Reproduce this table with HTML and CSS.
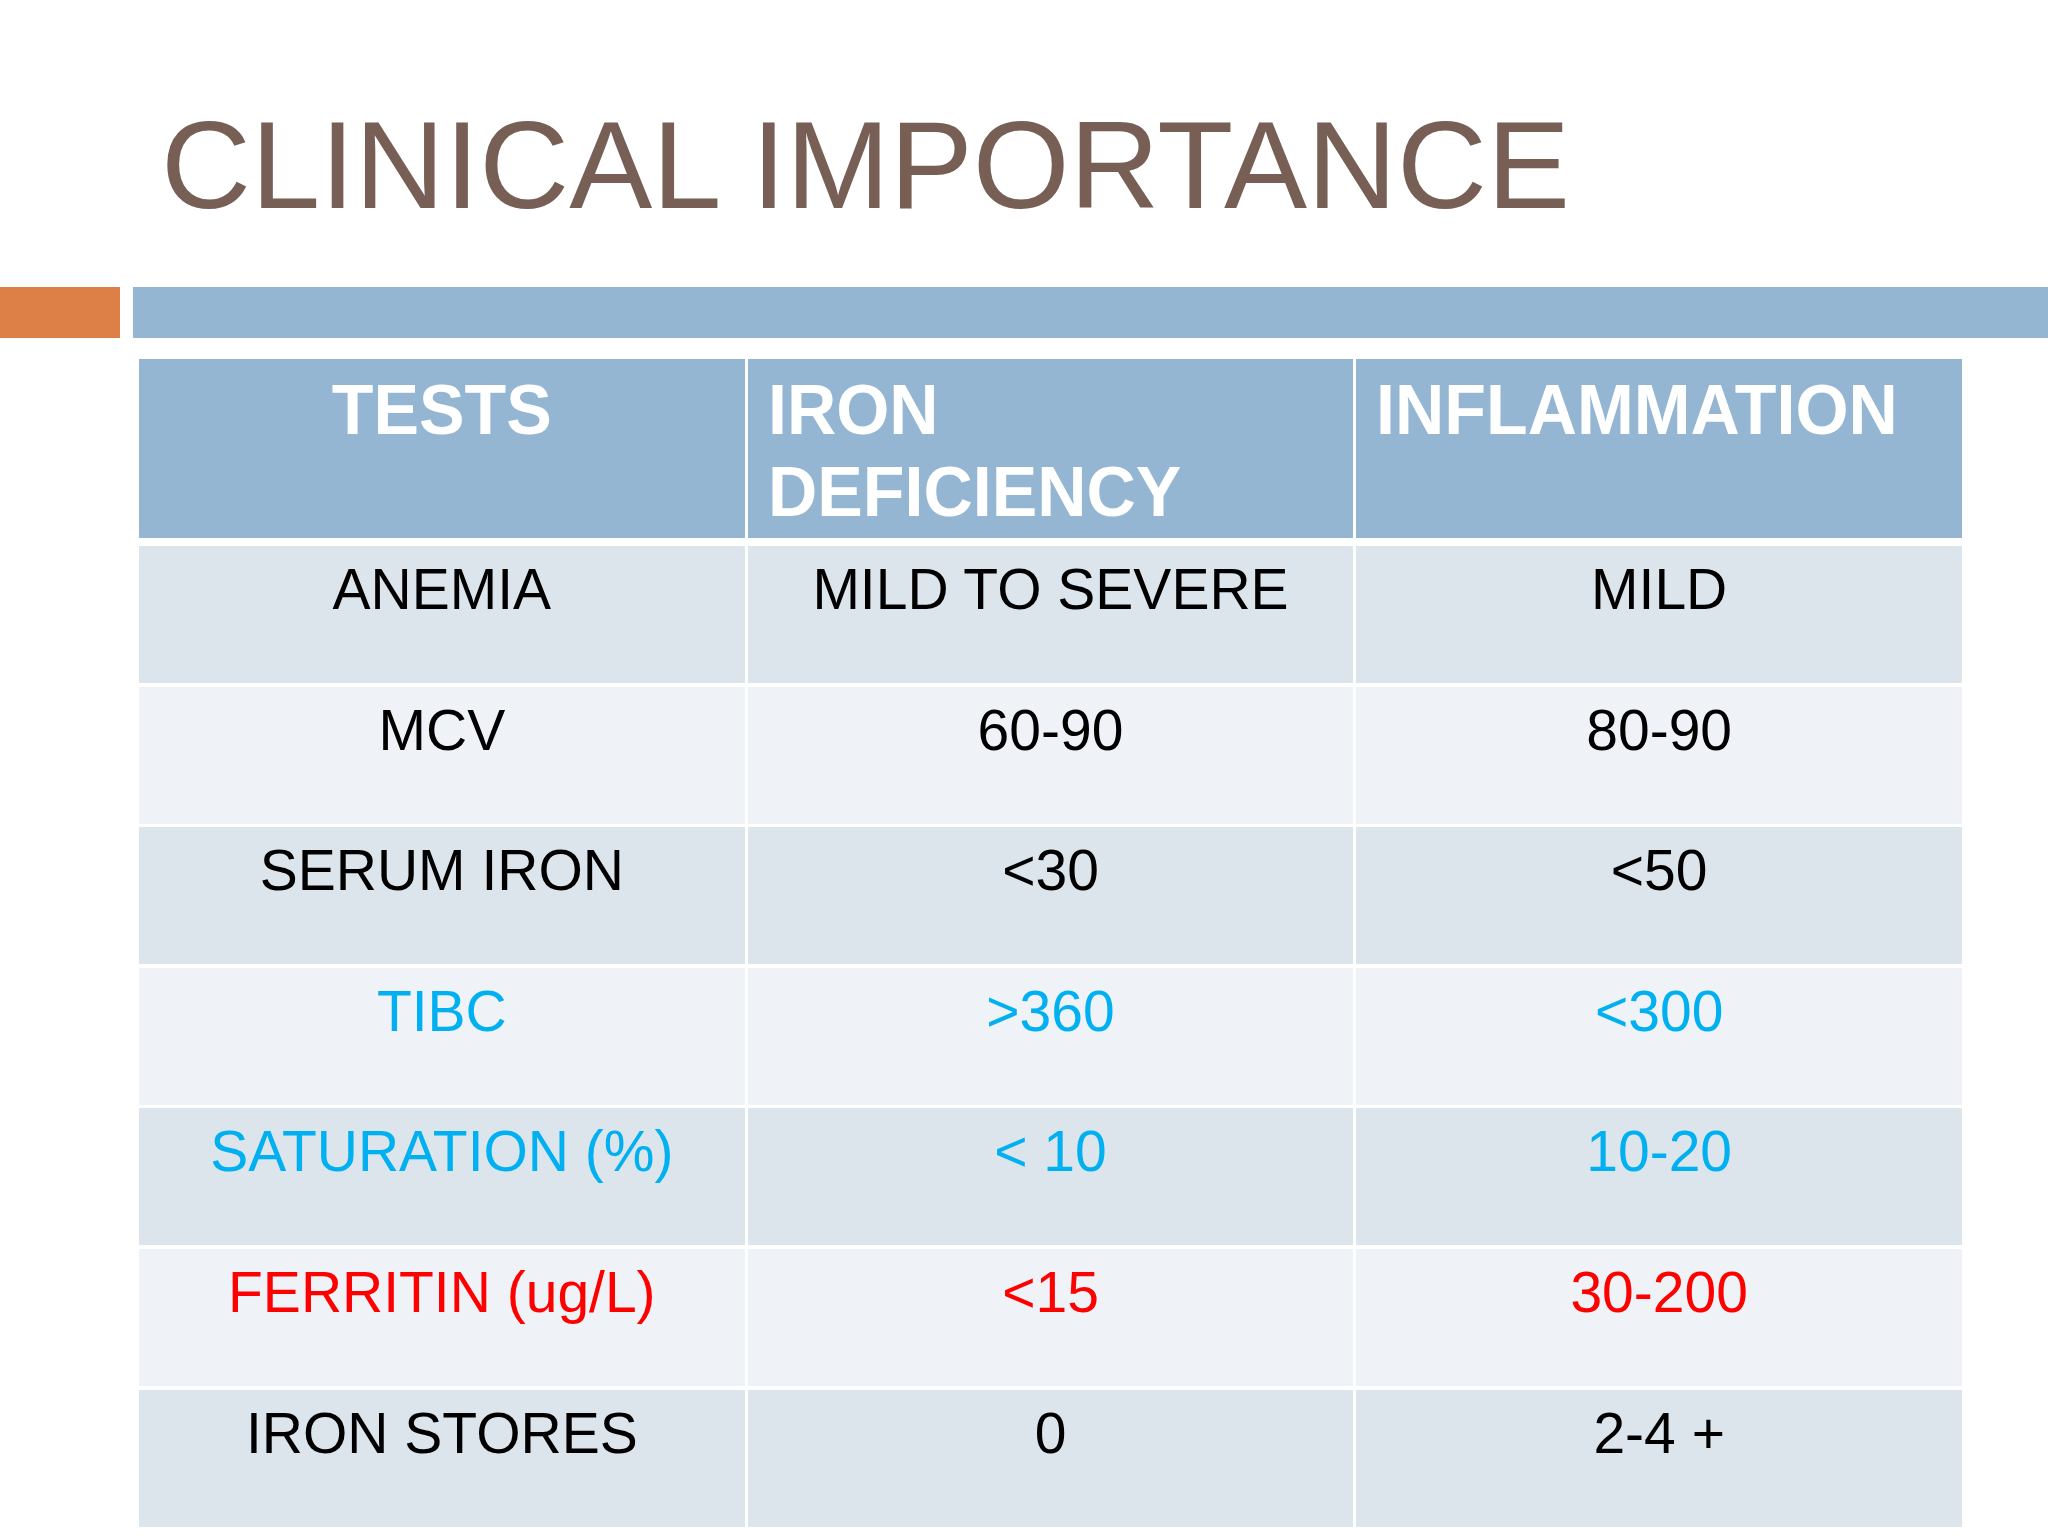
FILE: index.html
```html
<!DOCTYPE html>
<html lang="en">
<head>
<meta charset="utf-8">
<title>Clinical Importance</title>
<link rel="stylesheet" href="styles.css">
</head>
<body>
<div class="slide">
  <h1 class="title">CLINICAL IMPORTANCE</h1>
  <div class="bars">
    <div class="bar-accent"></div>
    <div class="bar-main"></div>
  </div>
  <div class="table">
    <div class="th th-center"><span class="sq sq-center">TESTS</span></div>
    <div class="th"><span class="sq">IRON<br>DEFICIENCY</span></div>
    <div class="th"><span class="sq">INFLAMMATION</span></div>

    <div class="td band1">ANEMIA</div>
    <div class="td band1">MILD TO SEVERE</div>
    <div class="td band1">MILD</div>

    <div class="td band2">MCV</div>
    <div class="td band2">60-90</div>
    <div class="td band2">80-90</div>

    <div class="td band1">SERUM IRON</div>
    <div class="td band1">&lt;30</div>
    <div class="td band1">&lt;50</div>

    <div class="td band2 blue">TIBC</div>
    <div class="td band2 blue">&gt;360</div>
    <div class="td band2 blue">&lt;300</div>

    <div class="td band1 blue">SATURATION (%)</div>
    <div class="td band1 blue">&lt; 10</div>
    <div class="td band1 blue">10-20</div>

    <div class="td band2 red">FERRITIN (ug/L)</div>
    <div class="td band2 red">&lt;15</div>
    <div class="td band2 red">30-200</div>

    <div class="td band1">IRON STORES</div>
    <div class="td band1">0</div>
    <div class="td band1">2-4 +</div>
  </div>
</div>
</body>
</html>
```

FILE: styles.css
```css
html, body {
  margin: 0;
  padding: 0;
  background: #ffffff;
}

.slide {
  width: 2048px;
  height: 1536px;
  overflow: hidden;
  font-family: "Liberation Sans", Arial, sans-serif;
  color: #000000;
}

.title {
  margin: 0;
  padding: 103px 0 0 161px;
  font-size: 124.5px;
  line-height: 124px;
  font-weight: normal;
  color: #775F55;
  white-space: nowrap;
}

.bars {
  display: flex;
  gap: 13px;
  margin-top: 60px;
  height: 51px;
}

.bar-accent {
  width: 120px;
  background: #DD8047;
}

.bar-main {
  flex: 1;
  background: #94B6D2;
}

.table {
  display: grid;
  grid-template-columns: repeat(3, 1fr);
  grid-template-rows: 183.4px repeat(7, 137px);
  column-gap: 3px;
  row-gap: 3.6px;
  width: 1823px;
  margin: 21px 0 0 139px;
}

.th {
  height: 179px;
  box-sizing: border-box;
  padding: 11px 20px 0;
  background: #94B6D2;
  color: #ffffff;
  font-weight: bold;
  font-size: 70px;
  line-height: 81.7px;
  text-align: left;
}

.th-center {
  text-align: center;
}

.sq {
  display: inline-block;
  transform: scaleX(0.975);
  transform-origin: left top;
  white-space: nowrap;
}

.sq-center {
  transform-origin: center top;
}

.td {
  box-sizing: border-box;
  padding-top: 9px;
  text-align: center;
  font-size: 57px;
  line-height: 1.2;
  white-space: nowrap;
}

.band1 {
  background: #DCE4EC;
}

.band2 {
  background: #EFF2F7;
}

.blue {
  color: #00B0F0;
}

.red {
  color: #FF0000;
}
```
